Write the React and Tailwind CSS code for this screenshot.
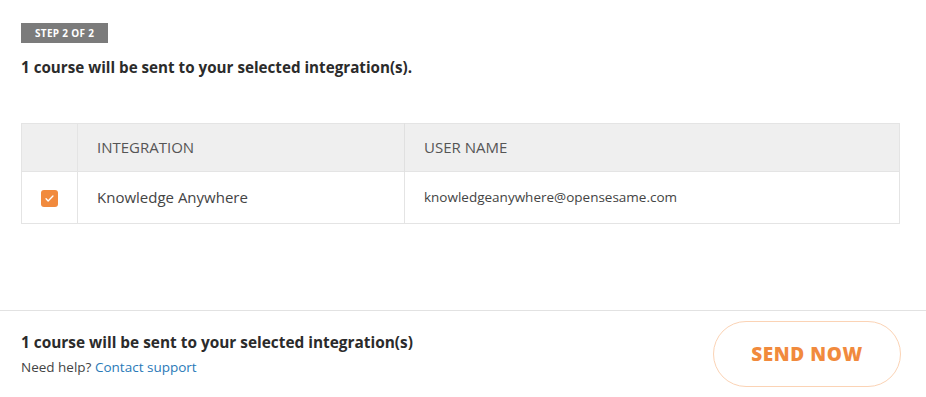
import React from "react";

function CheckIcon() {
  return (
    <svg viewBox="0 0 16 16" className="h-[11px] w-[11px]" fill="none">
      <path d="M3 8.5l3 3 7-7" stroke="white" strokeWidth="2" strokeLinecap="round" strokeLinejoin="round" />
    </svg>
  );
}

export default function App() {
  const rows = [{ name: "Knowledge Anywhere", user: "knowledgeanywhere@opensesame.com", checked: true }];

  return (
    <div className="w-[926px] h-[397px] bg-white text-[#333] flex flex-col" style={{ fontFamily: '"Open Sans", "Liberation Sans", sans-serif' }}>
      <div className="px-[21px] pt-[23px] h-[310px]">
        <div className="flex w-fit items-center h-[20px] px-[14px] bg-[#7b7b7b] text-white text-[10px] font-bold tracking-[0.3px]">
          STEP 2 OF 2
        </div>
        <h2 className="mt-[13px] text-[15.2px] font-bold leading-[22px] text-[#2b2b2b]">
          1 course will be sent to your selected integration(s).
        </h2>

        <table className="mt-[45px] w-[879px] border-collapse border border-[#e4e4e4] text-left">
          <thead className="bg-[#efefef]">
            <tr className="h-[48px]">
              <th className="w-[56px] border-r border-[#e4e4e4]"></th>
              <th className="w-[327px] px-[19px] text-[15px] font-normal text-[#555] border-r border-[#e0e0e0]">INTEGRATION</th>
              <th className="px-[19px] text-[15px] font-normal text-[#555]">USER NAME</th>
            </tr>
          </thead>
          <tbody>
            {rows.map((r) => (
              <tr key={r.user} className="h-[52px] border-t border-[#e4e4e4]">
                <td className="border-r border-[#e4e4e4]">
                  <div className="ml-[19px] mt-[2px] h-[17px] w-[17px] rounded-[3px] bg-[#f18a3d] flex items-center justify-center">
                    {r.checked && <CheckIcon />}
                  </div>
                </td>
                <td className="px-[19px] text-[15px] text-[#444] border-r border-[#e4e4e4]">{r.name}</td>
                <td className="px-[19px] text-[13.5px] text-[#444]">{r.user}</td>
              </tr>
            ))}
          </tbody>
        </table>
      </div>

      <div className="border-t border-[#e2e2e2] flex-1 flex items-center justify-between pl-[21px] pr-[25px]">
        <div className="flex flex-col">
          <div className="text-[15.4px] font-bold text-[#2b2b2b] leading-[20px]">
            1 course will be sent to your selected integration(s)
          </div>
          <div className="mt-[5px] text-[13.5px] text-[#444] leading-[18px]">
            Need help? <a className="text-[#2a7ab8]">Contact support</a>
          </div>
        </div>
        <button className="h-[66px] w-[188px] rounded-full border border-[#fbd3b5] text-[#f18a3d] text-[19px] font-extrabold tracking-[0.6px]">
          SEND NOW
        </button>
      </div>
    </div>
  );
}
